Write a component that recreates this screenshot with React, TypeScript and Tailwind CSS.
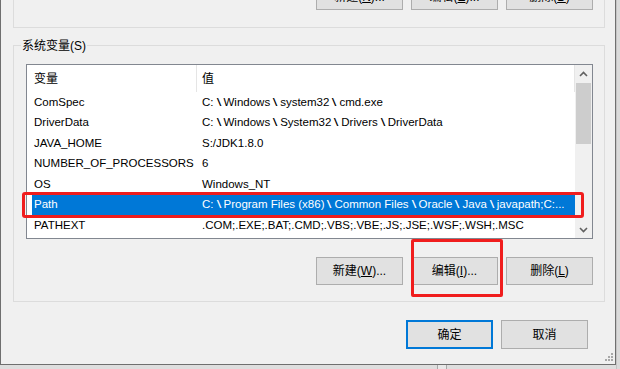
import { ReactNode } from "react";

const rows: [string, string][] = [
  ["ComSpec", "C:\\Windows\\system32\\cmd.exe"],
  ["DriverData", "C:\\Windows\\System32\\Drivers\\DriverData"],
  ["JAVA_HOME", "S:/JDK1.8.0"],
  ["NUMBER_OF_PROCESSORS", "6"],
  ["OS", "Windows_NT"],
  ["Path", "C:\\Program Files (x86)\\Common Files\\Oracle\\Java\\javapath;C:..."],
  ["PATHEXT", ".COM;.EXE;.BAT;.CMD;.VBS;.VBE;.JS;.JSE;.WSF;.WSH;.MSC"],
];

const font = "font-['Liberation_Sans','Noto_Sans_CJK_SC',sans-serif]";

type BtnProps = { children: ReactNode; primary?: boolean; className?: string };

const Btn = ({ children, primary, className }: BtnProps) => (
  <div
    className={
      "flex w-[87px] items-center justify-center bg-[#e1e1e1] text-[12px] text-black " +
      (primary ? "border-2 border-[#0078d7] " : "border border-[#adadad] ") +
      (className ?? "")
    }
  >
    {children}
  </div>
);

const Chevron = ({ down }: { down?: boolean }) => (
  <svg width="9" height="6" viewBox="0 0 9 6">
    <polyline
      points={down ? "1,1 4.5,4.5 8,1" : "1,5 4.5,1.5 8,5"}
      fill="none"
      stroke="#606060"
      strokeWidth="1.6"
    />
  </svg>
);

// the dialog font draws "\" much wider than Arial does
const PathText = ({ text }: { text: string }) => (
  <>
    {text.split("\\").map((part, i) => (
      <span key={i}>
        {i > 0 && <span className="inline-block w-[10px] scale-x-[1.45] text-center">\</span>}
        {part}
      </span>
    ))}
  </>
);

export default function App() {
  return (
    <div className={`relative flex h-[369px] w-[620px] overflow-hidden bg-[#e6e6e6] ${font}`}>
      <div className="flex w-[616px] flex-col">
        {/* dialog window */}
        <div className="relative flex h-[365px] w-[616px] flex-col border-x border-b border-[#6f6f6f] bg-[#f0f0f0]">
          {/* user variables group (cut off) */}
          <div className="ml-[12px] flex h-[28px] w-[592px] items-start justify-end gap-2 border-x border-b border-[#dcdcdc] pr-[11px]">
            <Btn className="-mt-[17px] h-[27px]">新建(<u>N</u>)...</Btn>
            <Btn className="-mt-[17px] h-[27px]">编辑(<u>E</u>)...</Btn>
            <Btn className="-mt-[17px] h-[27px]">删除(<u>D</u>)</Btn>
          </div>

          {/* system variables group */}
          <div className="relative ml-[12px] mt-[17px] flex h-[257px] w-[592px] flex-col border border-[#dcdcdc] pl-[12px] pr-[11px] pt-[18px]">
            <span className="absolute -top-[8px] left-[7px] bg-[#f0f0f0] px-[1px] text-[12px] leading-[16px] text-black">
              系统变量(S)
            </span>

            <div className="relative flex h-[175px] w-[567px] border border-[#828790] bg-white">
              <div className="flex w-[548px] flex-col">
                <div className="flex h-[27px] items-center text-[12px] text-black">
                  <div className="flex h-full w-[170px] items-center border-r border-[#e5e5e5] pl-[7px]">变量</div>
                  <div className="flex h-full flex-1 items-center border-r border-[#e5e5e5] pl-[5px]">值</div>
                </div>
                {rows.map(([name, value]) => {
                  const sel = name === "Path";
                  return (
                    <div key={name} className="flex h-[20.5px] text-[11.5px]">
                      <div
                        className={
                          "ml-[5px] flex flex-1 items-center whitespace-nowrap " +
                          (sel ? "bg-[#0078d7] text-white" : "text-black")
                        }
                      >
                        <div className="w-[164px] overflow-hidden pl-[2px]">{name}</div>
                        <div className="flex-1 overflow-hidden pl-[6px]">
                          <PathText text={value} />
                        </div>
                      </div>
                    </div>
                  );
                })}
              </div>

              {/* scrollbar */}
              <div className="flex w-[17px] flex-col bg-[#f0f0f0]">
                <div className="flex h-[17px] items-center justify-center">
                  <Chevron />
                </div>
                <div className="flex-1">
                  <div className="mx-auto mt-[1px] h-[61px] w-[15px] bg-[#cdcdcd]" />
                </div>
                <div className="flex h-[17px] items-center justify-center">
                  <Chevron down />
                </div>
              </div>

              {/* red annotation around Path */}
              <div className="pointer-events-none absolute left-[-5px] top-[127px] h-[26px] w-[562px] rounded-[3px] border-[3px] border-[#f01d1d]" />
            </div>

            <div className="mt-[18px] flex justify-end gap-2">
              <Btn className="h-[28px]">新建(<u>W</u>)...</Btn>
              <div className="relative">
                <Btn className="h-[28px]">编辑(<u>I</u>)...</Btn>
                <div className="pointer-events-none absolute -top-[18px] left-0 h-[58px] w-[92px] rounded-[2px] border-[3px] border-[#f01d1d]" />
              </div>
              <Btn className="h-[28px]">删除(<u>L</u>)</Btn>
            </div>
          </div>

          <div className="mt-[18px] flex justify-end gap-2 pr-[27px]">
            <Btn primary className="h-[29px]">确定</Btn>
            <Btn className="h-[29px]">取消</Btn>
          </div>

          {/* size grip */}
          <svg className="absolute bottom-[2px] right-[1px]" width="9" height="9" viewBox="0 0 9 9">
            <g fill="#a8a8a8">
              <rect x="6" y="0" width="2" height="2" />
              <rect x="3" y="3" width="2" height="2" />
              <rect x="6" y="3" width="2" height="2" />
              <rect x="0" y="6" width="2" height="2" />
              <rect x="3" y="6" width="2" height="2" />
              <rect x="6" y="6" width="2" height="2" />
            </g>
          </svg>
        </div>
        <div className="flex h-[4px] bg-[#dedede]">
          <div className="ml-[437px] w-[10px] border-x border-[#a8a8a8] bg-[#e8e8e8]" />
        </div>
      </div>
      <div className="flex w-[4px] border-l border-[#c4c4c4] bg-[#dadada]" />
    </div>
  );
}
